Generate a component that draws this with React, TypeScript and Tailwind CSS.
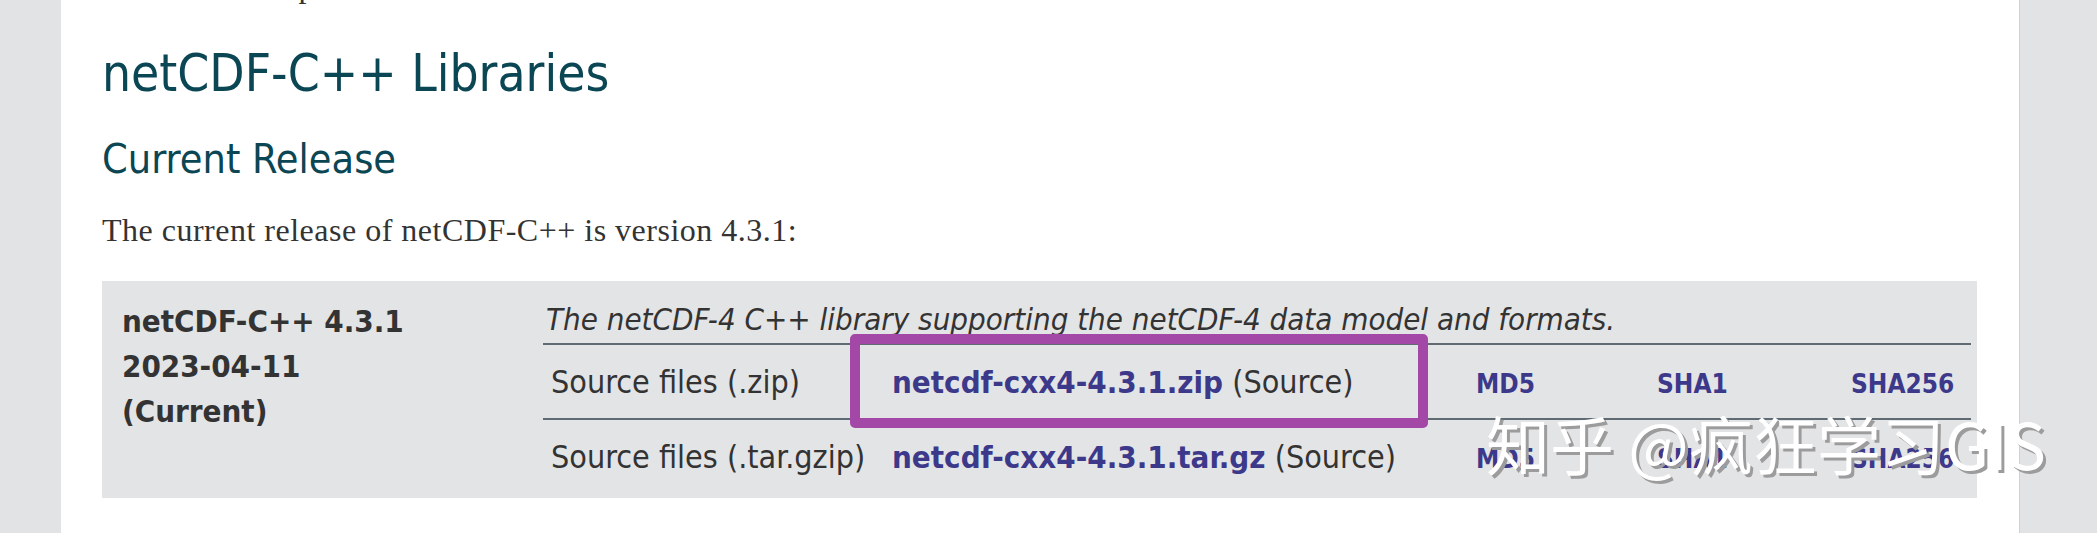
const sans = "font-['DejaVu_Sans_Condensed','DejaVu_Sans',sans-serif]";

const link = 'font-bold text-[31px] text-[#3d398a]';

const HashCells = () => (
  <>
    <div className="w-[181px] pl-[8px]">
      <span className="font-bold text-[#3d398a] text-[26px] leading-[36px]">MD5</span>
    </div>
    <div className="w-[194px] pl-[8px]">
      <span className="font-bold text-[#3d398a] text-[26px] leading-[36px]">SHA1</span>
    </div>
    <div className="w-[128px] pl-[8px]">
      <span className="font-bold text-[#3d398a] text-[26px] leading-[36px]">SHA256</span>
    </div>
  </>
);

const FileRow = ({ label, file, last }: { label: string; file: string; last?: boolean }) => (
  <div
    className={`flex items-baseline box-border ${
      last ? 'h-[78px] pt-[19px]' : 'h-[75px] pt-[19px] border-b-2 border-[#5f6a72]'
    }`}
  >
    <div className="w-[341px] pl-[8px] text-[32px] leading-[36px] text-[#333] whitespace-nowrap">{label}</div>
    <div className="w-[584px] pl-[8px] text-[32px] leading-[36px] text-[#333] whitespace-nowrap">
      <span className={link}>{file}</span> (Source)
    </div>
    <HashCells />
  </div>
);

export default function App() {
  return (
    <div className={`relative w-[2097px] h-[533px] overflow-hidden bg-[#e2e3e5] ${sans}`}>
      <div className="flex h-full">
        <div className="w-[61px] shrink-0" />
        <div className="w-[1959px] shrink-0 h-full bg-white border-r border-[#d0d1d4] pl-[41px] pr-[42px]">
          {/* cut-off line of the previous paragraph */}
          <div className="h-[5px] overflow-hidden">
            <p className="mt-[-30px] font-['Liberation_Serif',serif] text-[32px] leading-[32px] tracking-[0.5px] text-[#333] whitespace-nowrap">
              The full set of prior releases is in the archive.
            </p>
          </div>

          <h1 className="mt-[39px] text-[51px] leading-[60px] font-normal text-[#0b4654]">
            netCDF-C++ Libraries
          </h1>
          <h2 className="mt-[31px] text-[41px] leading-[48px] font-normal text-[#0b4654]">Current Release</h2>
          <p className="mt-[27px] font-['Liberation_Serif',serif] text-[32px] leading-[40px] tracking-[0.5px] text-[#333]">
            The current release of netCDF-C++ is version 4.3.1:
          </p>

          {/* release table */}
          <div className="mt-[31px] flex h-[217px] bg-[#e3e4e6]">
            <div className="w-[441px] shrink-0 pl-[20px] pt-[18px] text-[31px] leading-[45px] font-bold text-[#333]">
              <div>netCDF-C++ 4.3.1</div>
              <div>2023-04-11</div>
              <div>(Current)</div>
            </div>
            <div className="w-[1428px] shrink-0">
              <div className="box-border h-[64px] pt-[21px] pl-[3px] border-b-2 border-[#5f6a72] text-[31px] leading-[34px] italic text-[#333] whitespace-nowrap">
                The netCDF-4 C++ library supporting the netCDF-4 data model and formats.
              </div>
              <FileRow label="Source files (.zip)" file="netcdf-cxx4-4.3.1.zip" />
              <FileRow label="Source files (.tar.gzip)" file="netcdf-cxx4-4.3.1.tar.gz" last />
            </div>
          </div>
        </div>
      </div>

      {/* highlight box drawn over the table */}
      <div className="absolute left-[850px] top-[334px] w-[578px] h-[94px] border-[10px] border-[#a348a6] rounded-[5px]" />

      {/* watermark */}
      <div className="absolute left-[1486px] top-[410px] font-['Noto_Sans_CJK_SC',sans-serif] text-[64px] leading-none text-white whitespace-nowrap [text-shadow:3px_3px_0_#9c9c9c]">
        知乎 @疯狂学习GIS
      </div>
    </div>
  );
}
